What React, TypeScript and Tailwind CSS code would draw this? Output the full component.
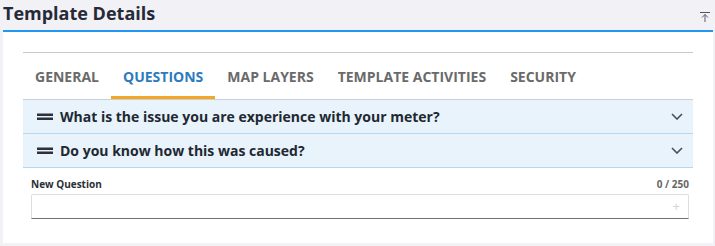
import React from 'react';

const tabs = ['GENERAL', 'QUESTIONS', 'MAP LAYERS', 'TEMPLATE ACTIVITIES', 'SECURITY'];

const questions = [
  'What is the issue you are experience with your meter?',
  'Do you know how this was caused?',
];

// drag handle: two thick bars
const DragHandle = () => (
  <svg width="16" height="8" viewBox="0 0 16 8" className="shrink-0">
    <rect x="0" y="0.5" width="16" height="2.5" fill="#2d3038" />
    <rect x="0" y="4.5" width="16" height="2.5" fill="#2d3038" />
  </svg>
);

const Chevron = () => (
  <svg width="12" height="7" viewBox="0 0 12 7" className="shrink-0">
    <path d="M1 1l5 5 5-5" fill="none" stroke="#4a4f57" strokeWidth="1.6" />
  </svg>
);

const ToTop = () => (
  <svg width="10" height="10" viewBox="0 0 10 10">
    <path d="M0 0.5h10" stroke="#555" strokeWidth="1" />
    <path d="M5 2.5v7.5M2 5.5l3-3 3 3" fill="none" stroke="#5a5a70" strokeWidth="1" />
  </svg>
);

export default function App() {
  return (
    <div className="w-[715px] h-[246px] bg-[#f1f1f6] font-['Open_Sans',sans-serif] flex flex-col overflow-hidden">
      {/* header */}
      <div className="h-[30px] flex items-start justify-between pl-[3px] pr-[5px] shrink-0">
        <h1 className="text-[18px] leading-[26px] font-bold text-[#262a36]">Template Details</h1>
        <div className="pt-[12px]">
          <ToTop />
        </div>
      </div>

      <div className="ml-[3px] mr-[2px] h-[213px] bg-white border-t-2 border-[#2196f3] px-[20px] pt-[20px]">
        <div className="border-t border-[#c8c8c8]" />

        {/* tabs */}
        <div className="flex border-b border-[#c7d0d8]">
          {tabs.map((t) => {
            const active = t === 'QUESTIONS';
            return (
              <div
                key={t}
                className={
                  active
                    ? 'px-3 pt-[16px] pb-[11px] border-b-[3px] border-[#f5a623] text-[14px] leading-[16px] font-bold text-[#2b7bbd]'
                    : 'px-3 pt-[16px] pb-[11px] border-b-[3px] border-transparent text-[14px] leading-[16px] font-bold text-[#6a6a6a]'
                }
              >
                {t}
              </div>
            );
          })}
        </div>

        {/* questions */}
        <div>
          {questions.map((q) => (
            <div key={q} className="h-[34px] flex items-center bg-[#e8f3fb] border-b border-[#b6d7f1] pl-[14px] pr-[10px]">
              <DragHandle />
              <span className="ml-[7px] flex-1 text-[14px] font-bold text-[#222831]">{q}</span>
              <Chevron />
            </div>
          ))}
        </div>

        {/* new question */}
        <div className="pl-2 pr-1 pt-[9px]">
          <div className="flex justify-between items-end">
            <span className="text-[10px] leading-[14px] font-bold text-[#2a2f38]">New Question</span>
            <span className="text-[10px] leading-[14px] font-bold text-[#666]">0 / 250</span>
          </div>
          <div className="mt-[3px] h-[25px] border border-[#dddddd] border-b-[#707070] rounded-t-[2px] flex items-center justify-end pr-[8px]">
            <span className="text-[13px] leading-none text-[#d4d4d4]">+</span>
          </div>
        </div>
      </div>
    </div>
  );
}
